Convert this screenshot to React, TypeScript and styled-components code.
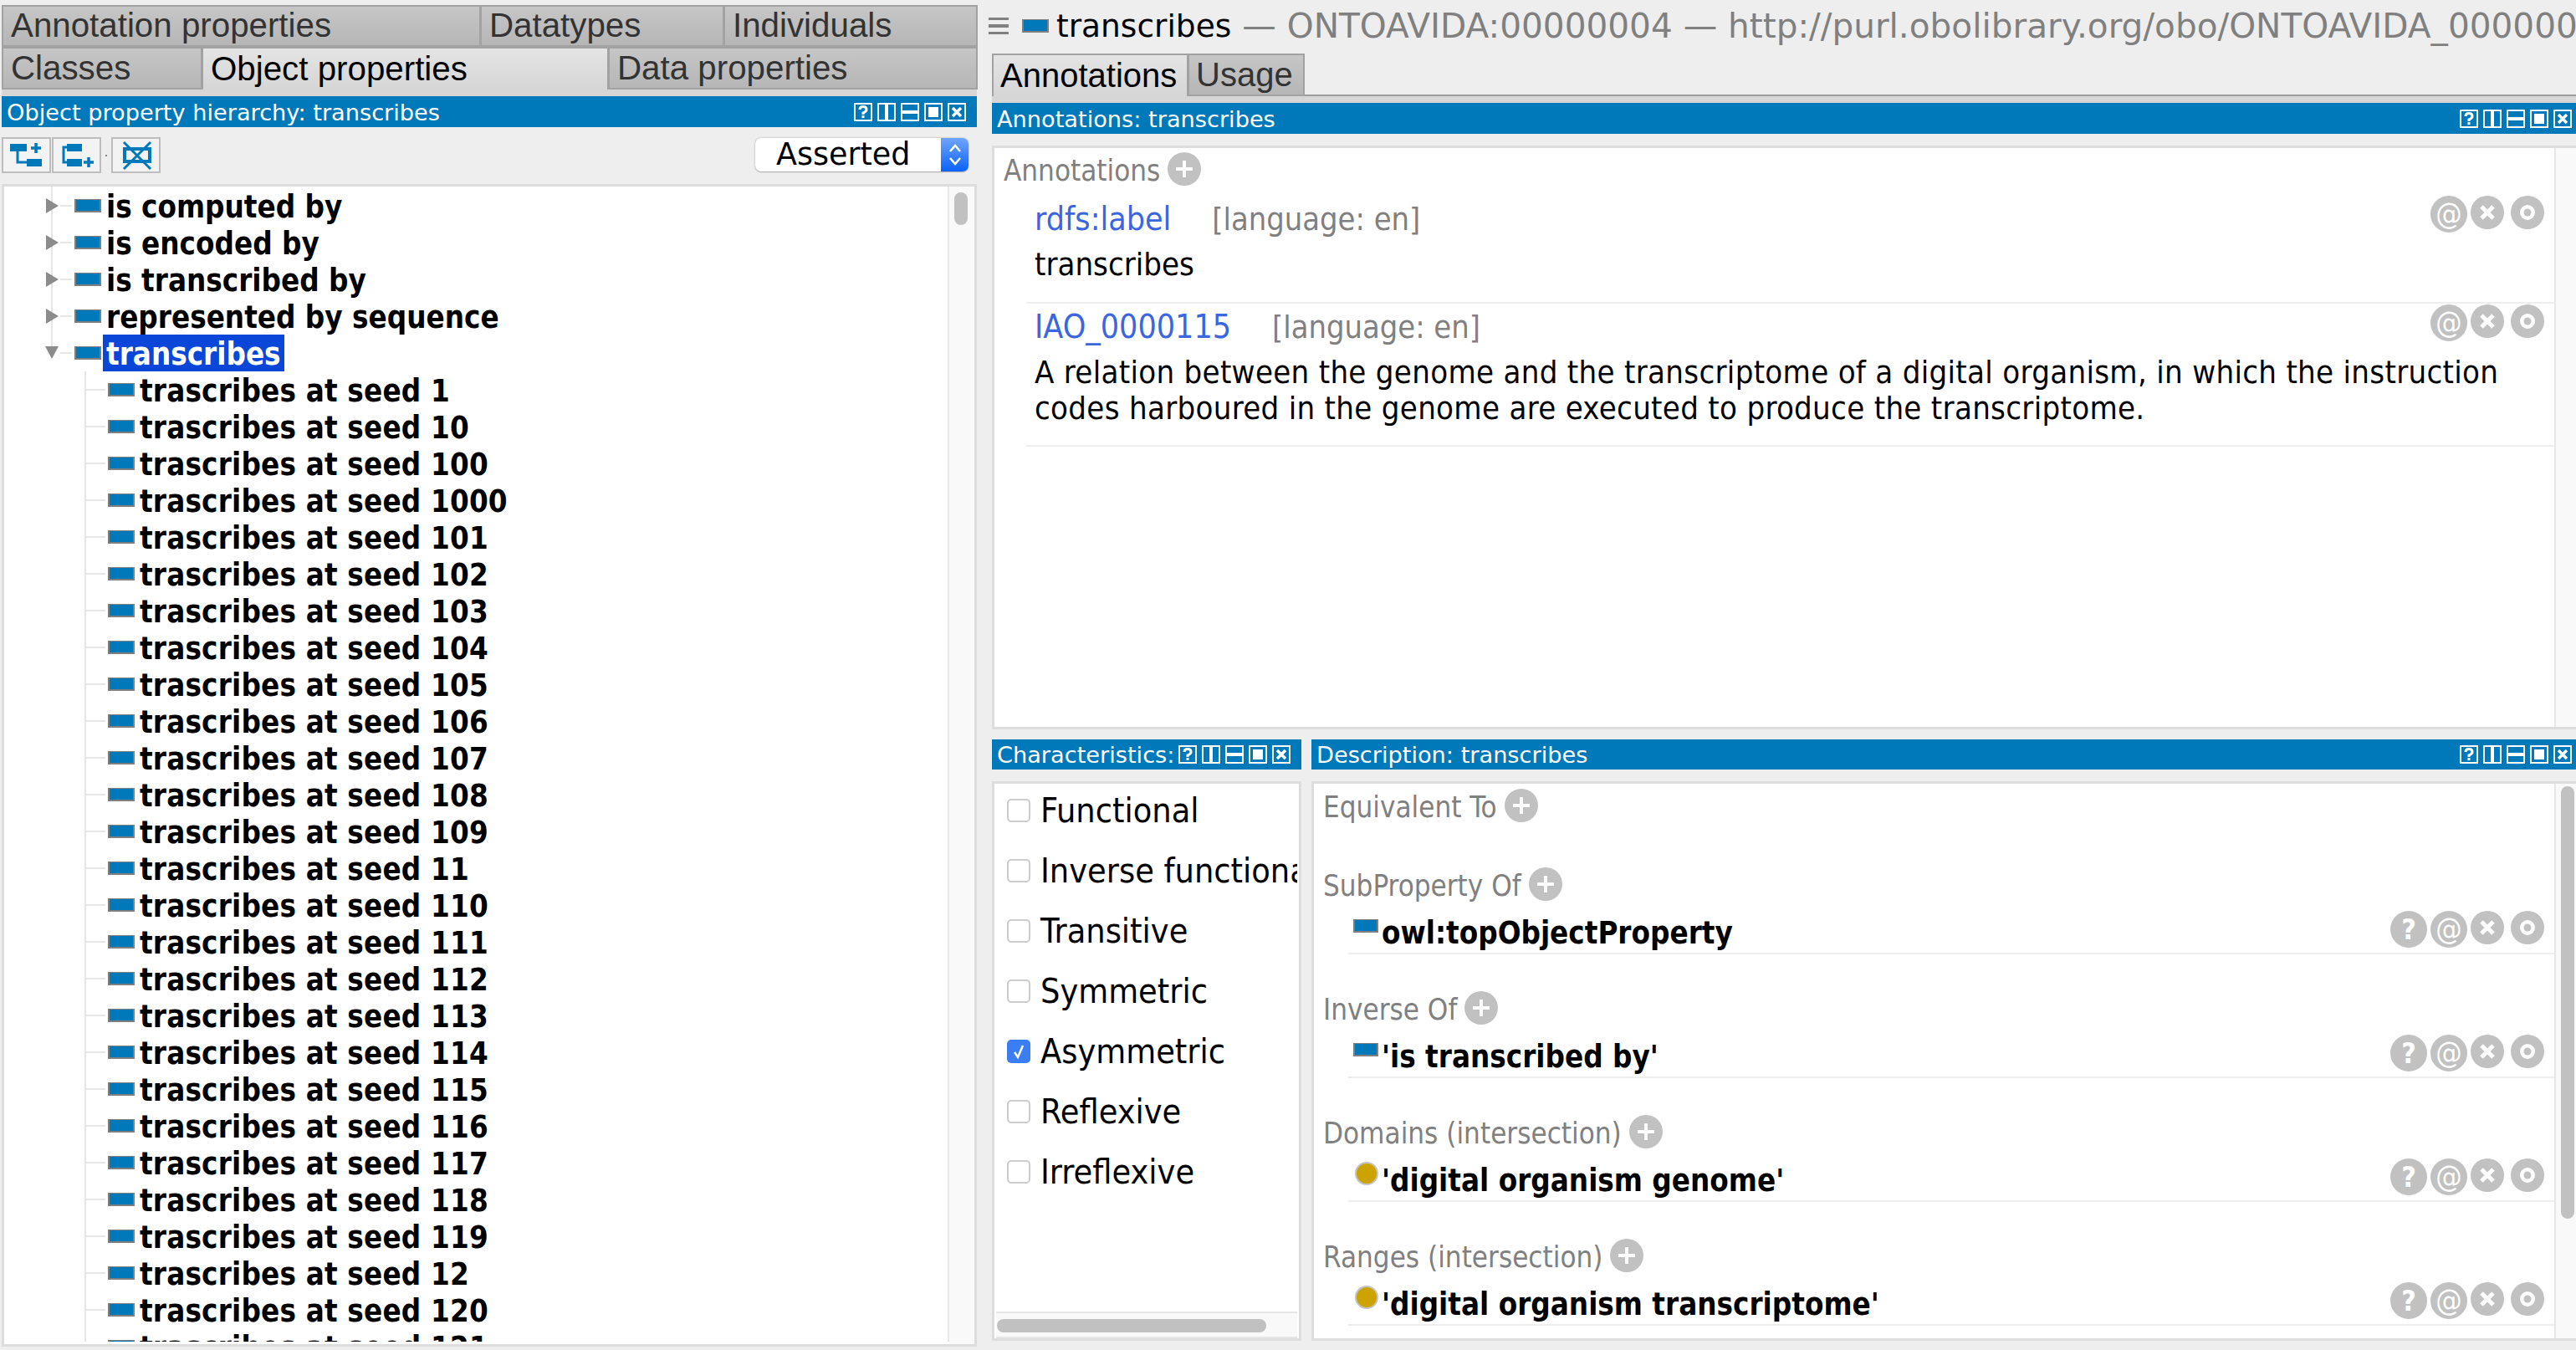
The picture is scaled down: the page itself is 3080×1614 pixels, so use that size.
import { FC, ReactNode } from 'react';
import styled, { createGlobalStyle } from 'styled-components';

const BLUE = '#0079ba';
const LUCIDA = `"DejaVu Sans", "Liberation Sans", sans-serif`;

const GlobalStyle = createGlobalStyle`
  html, body {
    margin: 0;
    padding: 0;
    background: #eeeeee;
    overflow: hidden;
  }
  * {
    box-sizing: border-box;
  }
`;

const Page = styled.div`
  display: grid;
  grid-template-columns: 1168px 1fr;
  grid-template-rows: minmax(0, 1fr);
  column-gap: 18px;
  width: 3080px;
  height: 1614px;
  background: #eeeeee;
  overflow: hidden;
`;

const LeftColumn = styled.div`
  display: flex;
  flex-direction: column;
  min-width: 0;
  min-height: 0;
  padding: 6px 0 4px 2px;
`;

const RightColumn = styled.div`
  display: flex;
  flex-direction: column;
  min-width: 0;
  min-height: 0;
  padding-bottom: 11px;
`;

/* tabs */
const TabRow = styled.div<{ $height: number }>`
  display: flex;
  height: ${({ $height }) => $height}px;
  flex: none;
`;

const Tab = styled.div<{ $active?: boolean; $width?: number }>`
  display: flex;
  align-items: center;
  width: ${({ $width }) => ($width ? `${$width}px` : 'auto')};
  flex: ${({ $width }) => ($width ? 'none' : '1')};
  padding-left: 9px;
  font-family: 'Liberation Sans', Arial, sans-serif;
  font-size: 40.300px;
  white-space: nowrap;
  color: ${({ $active }) => ($active ? '#000000' : '#333333')};
  background: ${({ $active }) =>
    $active
      ? 'linear-gradient(#e4e4e4, #d6d6d6)'
      : 'linear-gradient(#c6c6c6, #b6b6b6)'};
  border: 2px solid #a2a2a2;
  border-bottom: ${({ $active }) => ($active ? 'none' : '2px solid #a2a2a2')};
  margin-right: -1px;
`;

const TabStrip = styled.div`
  height: 8px;
  flex: none;
  background: #d6d6d6;
`;

/* blue view headers */
const TitleBar = styled.div<{ $inset: number; $height?: number }>`
  display: flex;
  align-items: center;
  flex: none;
  height: ${({ $height }) => $height ?? 37}px;
  padding: 0 ${({ $inset }) => $inset}px 0 6px;
  background: ${BLUE};
  color: #ffffff;
  font-family: ${LUCIDA};
  font-size: 27.200px;
  white-space: nowrap;
`;

const TitleText = styled.span`
  flex: 1;
  min-width: 0;
  overflow: hidden;
  padding-top: 1px;
`;

const WindowButtons = styled.div`
  display: flex;
  flex: none;
  gap: 6px;
`;

const WindowGlyph: FC<{ children: ReactNode }> = ({ children }) => (
  <svg width="22" height="22" viewBox="0 0 22 22" fill="#fff" stroke="none">
    <rect x="1" y="1" width="20" height="20" fill="none" stroke="#fff" strokeWidth="2" />
    {children}
  </svg>
);

const ViewButtons: FC = () => (
  <WindowButtons>
    <WindowGlyph>
      <path
        d="M7 8 Q7 4.5 11 4.5 Q15 4.5 15 8 Q15 10.5 11 12 V14"
        fill="none"
        stroke="#fff"
        strokeWidth="3"
      />
      <rect x="9.500" y="15" width="3" height="3" />
    </WindowGlyph>
    <WindowGlyph>
      <rect x="9" y="1" width="4" height="20" />
    </WindowGlyph>
    <WindowGlyph>
      <rect x="1" y="9" width="20" height="4" />
    </WindowGlyph>
    <WindowGlyph>
      <rect x="5" y="5" width="12" height="12" />
    </WindowGlyph>
    <WindowGlyph>
      <path d="M6 6 L16 16 M16 6 L6 16" fill="none" stroke="#fff" strokeWidth="3.500" />
    </WindowGlyph>
  </WindowButtons>
);

/* toolbar above the tree */
const Toolbar = styled.div`
  display: flex;
  align-items: flex-start;
  flex: none;
  height: 68px;
  padding: 12px 10px 0 0;
`;

const ToolButton = styled.div<{ $gap?: number }>`
  display: flex;
  width: 59px;
  height: 43px;
  flex: none;
  margin-left: ${({ $gap }) => $gap ?? 0}px;
  background: #f3f3f3;
  border: 2px solid #bdbdbd;
`;

const ToolDot = styled.span`
  width: 2px;
  height: 2px;
  margin: 21px 0 0 5px;
  background: #888888;
`;

const AssertedSelect = styled.div`
  display: flex;
  width: 255px;
  height: 40px;
  margin-left: auto;
  margin-top: 1px;
  background: #ffffff;
  border-radius: 7px;
  box-shadow: 0 0 2px #9a9a9a, 0 1px 1px #b5b5b5;
  overflow: hidden;
`;

const SelectText = styled.span`
  flex: 1;
  padding-left: 25px;
  font-family: ${LUCIDA};
  font-size: 36.500px;
  line-height: 40px;
  color: #000000;
`;

const SelectArrows = styled.span`
  display: flex;
  align-items: center;
  justify-content: center;
  width: 33px;
  background: linear-gradient(#6ea5fb, #0a62f8);
`;

/* white panels */
const Panel = styled.div<{ $height?: number; $flush?: boolean }>`
  display: flex;
  flex: ${({ $height }) => ($height ? 'none' : '1')};
  height: ${({ $height }) => ($height ? `${$height}px` : 'auto')};
  min-height: 0;
  min-width: 0;
  background: #ffffff;
  border: 3px solid #dddddd;
  border-right: ${({ $flush }) => ($flush ? 'none' : '3px solid #dddddd')};
  overflow: hidden;
`;

const Scroller = styled.div`
  flex: 1;
  min-width: 0;
  overflow: hidden;
  border-right: 2px solid #e8e8e8;
`;

const TreeScroller = styled(Scroller)`
  margin-bottom: 3px;
`;

const VerticalGutter = styled.div<{ $width: number; $top: number }>`
  position: relative;
  flex: none;
  width: ${({ $width }) => $width}px;
  padding-top: ${({ $top }) => $top}px;
  background: #f9f9f9;
`;

const ScrollThumb = styled.div<{ $length: number; $left: number }>`
  width: 16px;
  height: ${({ $length }) => $length}px;
  margin-left: ${({ $left }) => $left}px;
  background: #c1c1c1;
  border-radius: 8px;
`;

/* tree */
const Tree = styled.div`
  position: relative;
  padding-top: 1px;
  font-family: ${LUCIDA};
  font-stretch: condensed;
  font-weight: 700;
  font-size: 36.400px;
  color: #000000;
  white-space: nowrap;

  &::before {
    content: '';
    position: absolute;
    left: 56px;
    top: 0;
    height: 199px;
    width: 2px;
    background: #e6e6e6;
  }
`;

const TreeRow = styled.div<{ $indent: number }>`
  position: relative;
  display: flex;
  align-items: center;
  height: 44px;
  padding-left: ${({ $indent }) => $indent}px;
`;

const ChildList = styled.div`
  margin-left: 96px;
  border-left: 2px solid #e6e6e6;
  letter-spacing: 0.18px;
`;

const Toggle = styled.span<{ $open?: boolean }>`
  width: 0;
  height: 0;
  flex: none;
  margin-top: -1px;
  ${({ $open }) =>
    $open
      ? `border-left: 8px solid transparent;
         border-right: 8px solid transparent;
         border-top: 15px solid #8c8c8c;`
      : `border-top: 9px solid transparent;
         border-bottom: 9px solid transparent;
         border-left: 15px solid #8c8c8c;`}
`;

const Connector = styled.span<{ $width: number; $left: number }>`
  flex: none;
  width: ${({ $width }) => $width}px;
  height: 2px;
  margin-left: ${({ $left }) => $left}px;
  background: #e6e6e6;
`;

const PropertyIcon = styled.span<{ $width?: number; $left?: number; $top?: number }>`
  flex: none;
  width: ${({ $width }) => $width ?? 32}px;
  height: 16px;
  margin-left: ${({ $left }) => $left ?? 3}px;
  margin-top: ${({ $top }) => $top ?? 0}px;
  background: ${BLUE};
  border: 2px solid #7f7f7f;
  border-top-width: 1px;
`;

const TreeLabel = styled.span<{ $selected?: boolean }>`
  display: block;
  height: 44px;
  margin-left: 2px;
  padding: 0 4px;
  line-height: 48px;
  color: ${({ $selected }) => ($selected ? '#ffffff' : '#000000')};
  background: ${({ $selected }) => ($selected ? '#0a47d8' : 'transparent')};
`;

/* breadcrumb */
const Breadcrumb = styled.div`
  display: flex;
  align-items: center;
  flex: none;
  height: 64px;
  margin-left: -6px;
  padding: 0 0 3px 2px;
  font-family: ${LUCIDA};
  white-space: nowrap;
  overflow: hidden;
`;

const MenuBars = styled.span`
  flex: none;
  width: 24px;
  height: 20px;
  margin-right: 16px;
  border-top: 3px solid #808080;
  border-bottom: 3px solid #808080;
  position: relative;

  &::after {
    content: '';
    position: absolute;
    left: 0;
    right: 0;
    top: 5px;
    height: 4px;
    background: #808080;
  }
`;

const CrumbName = styled.span`
  margin-left: 9px;
  font-size: 37.500px;
  color: #000000;
`;

const CrumbRest = styled.span`
  margin-left: 13px;
  font-size: 40.600px;
  color: #808080;
`;

const RightTabs = styled.div`
  display: flex;
  flex: none;
  height: 51px;
  border-bottom: 2px solid #9c9c9c;
`;

const RightTab = styled(Tab)`
  height: 51px;
  padding-left: 8px;
  font-size: 40px;
`;

const Gap = styled.div<{ $size: number }>`
  flex: none;
  height: ${({ $size }) => $size}px;
`;

/* annotations */
const SectionLabel = styled.div<{ $left: number; $top?: number; $bottom?: number }>`
  display: flex;
  align-items: center;
  height: 40px;
  padding: 3px 0 0 ${({ $left }) => $left}px;
  margin-top: ${({ $top }) => $top ?? 0}px;
  margin-bottom: ${({ $bottom }) => $bottom ?? 0}px;
  font-family: ${LUCIDA};
  font-stretch: condensed;
  font-size: 34.700px;
  color: #808080;
  white-space: nowrap;
`;

const PlusButton = styled.span`
  position: relative;
  flex: none;
  width: 40px;
  height: 40px;
  margin: -3px 0 0 9px;
  border-radius: 50%;
  background: #c1c1c1;

  &::before,
  &::after {
    content: '';
    position: absolute;
    background: #ffffff;
  }
  &::before {
    left: 10px;
    right: 10px;
    top: 18px;
    height: 4px;
  }
  &::after {
    top: 10px;
    bottom: 10px;
    left: 18px;
    width: 4px;
  }
`;

const AnnotationItem = styled.div<{ $height: number; $top: number }>`
  display: flex;
  justify-content: space-between;
  height: ${({ $height }) => $height}px;
  margin-left: 38px;
  padding: ${({ $top }) => $top}px 12px 0 10px;
  border-bottom: 2px solid #eeeeee;
  font-family: ${LUCIDA};
  font-stretch: condensed;
  font-size: 38px;
`;

const AnnotationBody = styled.div<{ $offset: number }>`
  flex: 1;
  min-width: 0;
  padding-top: ${({ $offset }) => $offset}px;
`;

const AnnotationHead = styled.div<{ $gap: number }>`
  display: flex;
  gap: ${({ $gap }) => $gap}px;
  height: 44px;
  line-height: 44px;
  margin-bottom: 11px;
`;

const PropertyLink = styled.span`
  font-size: 39px;
  color: #3b66e0;
`;

const LanguageTag = styled.span`
  font-size: 37.700px;
  color: #808080;
`;

const AnnotationValue = styled.div`
  width: 1790px;
  line-height: 43px;
  color: #000000;
`;

const DefinitionText = styled(AnnotationValue)`
  letter-spacing: 0.3px;
`;

const RowButtons = styled.div`
  display: flex;
  flex: none;
  align-items: flex-start;
  gap: 4px;
`;

const RoundButton = styled.span<{ $large?: boolean; $last?: boolean }>`
  display: flex;
  align-items: center;
  justify-content: center;
  flex: none;
  width: ${({ $large }) => ($large ? 44 : 40)}px;
  height: ${({ $large }) => ($large ? 44 : 40)}px;
  margin-left: ${({ $last }) => ($last ? 4 : 0)}px;
  border-radius: 50%;
  background: #c1c1c1;
  color: #ffffff;
  font-family: ${LUCIDA};
  font-size: 34px;
  font-weight: 700;
  line-height: 44px;
`;

const AtSign = styled.span`
  font-weight: 400;
  font-size: 35px;
`;

const RowGlyph: FC<{ children: ReactNode }> = ({ children }) => (
  <svg width="40" height="40" viewBox="0 0 40 40">
    {children}
  </svg>
);

const ActionButtons: FC<{ help?: boolean }> = ({ help }) => (
  <RowButtons>
    {help && <RoundButton $large>?</RoundButton>}
    <RoundButton $large>
      <AtSign>@</AtSign>
    </RoundButton>
    <RoundButton>
      <RowGlyph>
        <path d="M13 13 L27 27 M27 13 L13 27" stroke="#fff" strokeWidth="5" fill="none" />
      </RowGlyph>
    </RoundButton>
    <RoundButton $last>
      <RowGlyph>
        <circle cx="20" cy="20" r="9" fill="#fff" />
        <circle cx="20" cy="20" r="4.500" fill="#c1c1c1" />
      </RowGlyph>
    </RoundButton>
  </RowButtons>
);

/* lower views */
const LowerViews = styled.div`
  display: grid;
  grid-template-columns: 370px 1fr;
  grid-template-rows: minmax(0, 1fr);
  column-gap: 12px;
  flex: 1;
  min-height: 0;
`;

const ViewColumn = styled.div`
  display: flex;
  flex-direction: column;
  min-width: 0;
  min-height: 0;
`;

const CharacteristicsPanel = styled(Panel)`
  flex-direction: column;
`;

const CheckList = styled.div`
  display: flex;
  flex-direction: column;
  flex: 1;
  gap: 36px;
  padding: 14px 0 0 15px;
  min-height: 0;
  margin-right: 2px;
  overflow: hidden;
`;

const CheckRow = styled.div`
  display: flex;
  align-items: center;
  height: 36px;
  gap: 12px;
  font-family: ${LUCIDA};
  font-stretch: condensed;
  font-size: 41px;
  color: #000000;
  white-space: nowrap;
`;

const CheckBox = styled.span<{ $checked?: boolean }>`
  display: flex;
  align-items: center;
  justify-content: center;
  flex: none;
  width: 28px;
  height: 28px;
  border-radius: 5px;
  background: ${({ $checked }) => ($checked ? '#3b7df2' : '#ffffff')};
  border: ${({ $checked }) => ($checked ? 'none' : '2px solid #cccccc')};
`;

const HorizontalGutter = styled.div`
  flex: none;
  height: 32px;
  margin: 0 2px;
  padding: 7px 0 0 1px;
  background: #f9f9f9;
  border-top: 2px solid #e6e6e6;
  border-bottom: 2px solid #e6e6e6;
`;

const HorizontalThumb = styled.div`
  width: 322px;
  height: 16px;
  background: #c1c1c1;
  border-radius: 8px;
`;

const DescriptionBody = styled(Scroller)`
  padding-top: 3px;
`;

const DescriptionRow = styled.div`
  display: flex;
  align-items: flex-start;
  height: 52px;
  margin: 0 0 44px 41px;
  padding: 0 12px 0 6px;
  border-bottom: 2px solid #eeeeee;
  font-family: ${LUCIDA};
  font-stretch: condensed;
  font-size: 36.400px;
  font-weight: 700;
  line-height: 53px;
  color: #000000;
  white-space: nowrap;
`;

const ClassDot = styled.span`
  flex: none;
  width: 28px;
  height: 28px;
  margin: 4px 0 0 2px;
  border-radius: 50%;
  background: #cca300;
  border: 2px solid #c4c4c4;
`;

const RowText = styled.span`
  flex: 1;
  margin-left: 4px;
`;

const seeds = [
  '1', '10', '100', '1000', '101', '102', '103', '104', '105', '106', '107', '108', '109',
  '11', '110', '111', '112', '113', '114', '115', '116', '117', '118', '119', '12', '120', '121',
];

const parents = ['is computed by', 'is encoded by', 'is transcribed by', 'represented by sequence'];
const characteristics = [
  'Functional',
  'Inverse functional',
  'Transitive',
  'Symmetric',
  'Asymmetric',
  'Reflexive',
  'Irreflexive',
];

const App: FC = () => (
  <>
    <GlobalStyle />
    <Page>
      <LeftColumn>
        <TabRow $height={50}>
          <Tab $width={573}>Annotation properties</Tab>
          <Tab $width={292}>Datatypes</Tab>
          <Tab>Individuals</Tab>
        </TabRow>
        <TabRow $height={51}>
          <Tab $width={240}>Classes</Tab>
          <Tab $active $width={487}>
            Object properties
          </Tab>
          <Tab>Data properties</Tab>
        </TabRow>
        <TabStrip />
        <TitleBar $inset={13}>
          <TitleText>Object property hierarchy: transcribes</TitleText>
          <ViewButtons />
        </TitleBar>
        <Toolbar>
          <ToolButton>
            <svg width="55" height="39" viewBox="2 2 55 39">
              <path d="M19 16 V30 H30" fill="none" stroke={BLUE} strokeWidth="3" />
              <rect x="10" y="8" width="20" height="9" fill={BLUE} />
              <rect x="30" y="26" width="18" height="9" fill={BLUE} />
              <path d="M41 7 V19 M35 13 H47" stroke={BLUE} strokeWidth="3.500" />
            </svg>
          </ToolButton>
          <ToolButton $gap={1}>
            <svg width="55" height="39" viewBox="2 2 55 39">
              <path d="M18 12 H14 V30 H18" fill="none" stroke={BLUE} strokeWidth="3" />
              <rect x="18" y="8" width="18" height="9" fill={BLUE} />
              <rect x="18" y="26" width="18" height="9" fill={BLUE} />
              <path d="M44 24 V36 M38 30 H50" stroke={BLUE} strokeWidth="3.500" />
            </svg>
          </ToolButton>
          <ToolDot />
          <ToolButton $gap={5}>
            <svg width="55" height="39" viewBox="2 2 55 39">
              <rect x="16" y="14" width="30" height="15" fill="none" stroke={BLUE} strokeWidth="4" />
              <path d="M15 6 L47 38 M47 6 L15 38" stroke={BLUE} strokeWidth="3" />
            </svg>
          </ToolButton>
          <AssertedSelect>
            <SelectText>Asserted</SelectText>
            <SelectArrows>
              <svg width="16" height="30" viewBox="0 0 16 30" fill="none" stroke="#fff" strokeWidth="2.500">
                <path d="M2 11 L8 4 L14 11 M2 19 L8 26 L14 19" />
              </svg>
            </SelectArrows>
          </AssertedSelect>
        </Toolbar>
        <Panel>
          <TreeScroller>
            <Tree>
              {parents.map((name) => (
                <TreeRow key={name} $indent={50}>
                  <Toggle />
                  <Connector $width={14} $left={2} />
                  <PropertyIcon />
                  <TreeLabel>{name}</TreeLabel>
                </TreeRow>
              ))}
              <TreeRow $indent={49}>
                <Toggle $open />
                <Connector $width={14} $left={2} />
                <PropertyIcon />
                <TreeLabel $selected>transcribes</TreeLabel>
              </TreeRow>
              <ChildList>
                {seeds.map((seed) => (
                  <TreeRow key={seed} $indent={0}>
                    <Connector $width={23} $left={0} />
                    <PropertyIcon />
                    <TreeLabel>trascribes at seed {seed}</TreeLabel>
                  </TreeRow>
                ))}
              </ChildList>
            </Tree>
          </TreeScroller>
          <VerticalGutter $width={30} $top={7}>
            <ScrollThumb $length={39} $left={6} />
          </VerticalGutter>
        </Panel>
      </LeftColumn>

      <RightColumn>
        <Breadcrumb>
          <MenuBars />
          <PropertyIcon $left={0} />
          <CrumbName>transcribes</CrumbName>
          <CrumbRest>— ONTOAVIDA:00000004 — http://purl.obolibrary.org/obo/ONTOAVIDA_00000004</CrumbRest>
        </Breadcrumb>
        <RightTabs>
          <RightTab $active $width={235}>
            Annotations
          </RightTab>
          <RightTab $width={140}>Usage</RightTab>
        </RightTabs>
        <TabStrip />
        <TitleBar $inset={5}>
          <TitleText>Annotations: transcribes</TitleText>
          <ViewButtons />
        </TitleBar>
        <Gap $size={14} />
        <Panel $height={698} $flush>
          <Scroller>
            <SectionLabel $left={11} $top={5} $bottom={12}>
              Annotations
              <PlusButton />
            </SectionLabel>
            <AnnotationItem $height={129} $top={0}>
              <AnnotationBody $offset={6}>
                <AnnotationHead $gap={49}>
                  <PropertyLink>rdfs:label</PropertyLink>
                  <LanguageTag>[language: en]</LanguageTag>
                </AnnotationHead>
                <AnnotationValue>transcribes</AnnotationValue>
              </AnnotationBody>
              <ActionButtons />
            </AnnotationItem>
            <AnnotationItem $height={171} $top={1}>
              <AnnotationBody $offset={5}>
                <AnnotationHead $gap={49}>
                  <PropertyLink>IAO_0000115</PropertyLink>
                  <LanguageTag>[language: en]</LanguageTag>
                </AnnotationHead>
                <DefinitionText>
                  A relation between the genome and the transcriptome of a digital organism, in which the instruction
                  codes harboured in the genome are executed to produce the transcriptome.
                </DefinitionText>
              </AnnotationBody>
              <ActionButtons />
            </AnnotationItem>
          </Scroller>
          <VerticalGutter $width={24} $top={0} />
        </Panel>
        <Gap $size={12} />
        <LowerViews>
          <ViewColumn>
            <TitleBar $inset={13} $height={36}>
              <TitleText>Characteristics:</TitleText>
              <ViewButtons />
            </TitleBar>
            <Gap $size={14} />
            <CharacteristicsPanel>
              <CheckList>
                {characteristics.map((name) => (
                  <CheckRow key={name}>
                    <CheckBox $checked={name === 'Asymmetric'}>
                      {name === 'Asymmetric' && (
                        <svg width="18" height="20" viewBox="0 0 18 20" fill="none" stroke="#fff" strokeWidth="2.500">
                          <path d="M4 11 L8 17 L14 3" />
                        </svg>
                      )}
                    </CheckBox>
                    {name}
                  </CheckRow>
                ))}
              </CheckList>
              <HorizontalGutter>
                <HorizontalThumb />
              </HorizontalGutter>
            </CharacteristicsPanel>
          </ViewColumn>
          <ViewColumn>
            <TitleBar $inset={5} $height={36}>
              <TitleText>Description: transcribes</TitleText>
              <ViewButtons />
            </TitleBar>
            <Gap $size={14} />
            <Panel $flush>
              <DescriptionBody>
                <SectionLabel $left={11} $top={3} $bottom={54}>
                  Equivalent To
                  <PlusButton />
                </SectionLabel>
                <SectionLabel $left={11} $bottom={12}>
                  SubProperty Of
                  <PlusButton />
                </SectionLabel>
                <DescriptionRow>
                  <PropertyIcon $width={30} $left={0} $top={10} />
                  <RowText>owl:topObjectProperty</RowText>
                  <ActionButtons help />
                </DescriptionRow>
                <SectionLabel $left={11} $bottom={12}>
                  Inverse Of
                  <PlusButton />
                </SectionLabel>
                <DescriptionRow>
                  <PropertyIcon $width={30} $left={0} $top={10} />
                  <RowText>'is transcribed by'</RowText>
                  <ActionButtons help />
                </DescriptionRow>
                <SectionLabel $left={11} $bottom={12}>
                  Domains (intersection)
                  <PlusButton />
                </SectionLabel>
                <DescriptionRow>
                  <ClassDot />
                  <RowText>'digital organism genome'</RowText>
                  <ActionButtons help />
                </DescriptionRow>
                <SectionLabel $left={11} $bottom={12}>
                  Ranges (intersection)
                  <PlusButton />
                </SectionLabel>
                <DescriptionRow>
                  <ClassDot />
                  <RowText>'digital organism transcriptome'</RowText>
                  <ActionButtons help />
                </DescriptionRow>
              </DescriptionBody>
              <VerticalGutter $width={24} $top={3}>
                <ScrollThumb $length={517} $left={6} />
              </VerticalGutter>
            </Panel>
          </ViewColumn>
        </LowerViews>
      </RightColumn>
    </Page>
  </>
);

export default App;
